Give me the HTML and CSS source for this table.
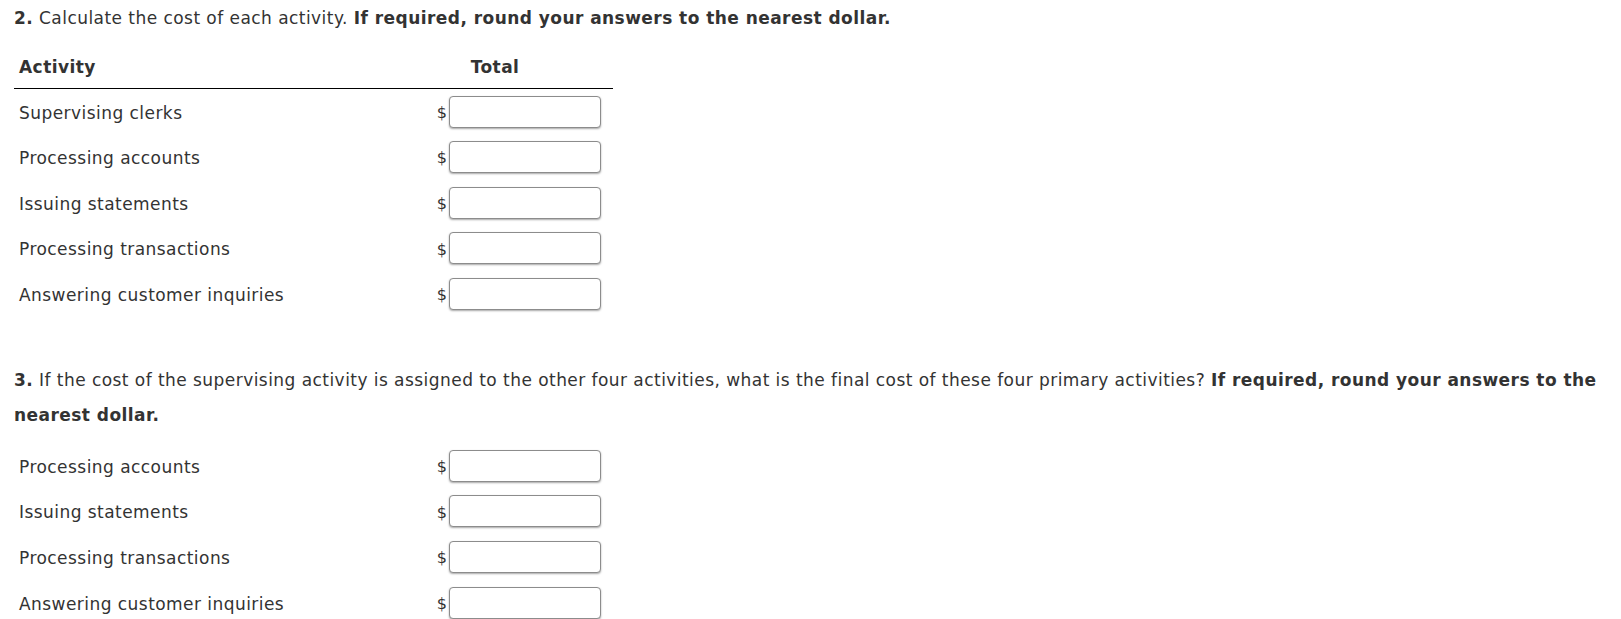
FILE: index.html
```html
<!DOCTYPE html>
<html>
<head>
<meta charset="utf-8">
<link rel="stylesheet" href="styles.css">
</head>
<body>
<div class="page">
  <p class="q q2"><b>2.</b> Calculate the cost of each activity. <b>If required, round your answers to the nearest dollar.</b></p>
  <table class="grid">
    <thead>
      <tr><th class="h-label">Activity</th><th class="h-total">Total</th></tr>
    </thead>
    <tbody>
      <tr><td class="c-label">Supervising clerks</td><td class="c-input"><span class="cur">$</span><span class="box"></span></td></tr>
      <tr><td class="c-label">Processing accounts</td><td class="c-input"><span class="cur">$</span><span class="box"></span></td></tr>
      <tr><td class="c-label">Issuing statements</td><td class="c-input"><span class="cur">$</span><span class="box"></span></td></tr>
      <tr><td class="c-label">Processing transactions</td><td class="c-input"><span class="cur">$</span><span class="box"></span></td></tr>
      <tr><td class="c-label">Answering customer inquiries</td><td class="c-input"><span class="cur">$</span><span class="box"></span></td></tr>
    </tbody>
  </table>
  <p class="q q3"><b>3.</b> If the cost of the supervising activity is assigned to the other four activities, what is the final cost of these four primary activities? <b>If required, round your answers to the<br>nearest dollar.</b></p>
  <table class="grid">
    <tbody>
      <tr><td class="c-label">Processing accounts</td><td class="c-input"><span class="cur">$</span><span class="box"></span></td></tr>
      <tr><td class="c-label">Issuing statements</td><td class="c-input"><span class="cur">$</span><span class="box"></span></td></tr>
      <tr><td class="c-label">Processing transactions</td><td class="c-input"><span class="cur">$</span><span class="box"></span></td></tr>
      <tr><td class="c-label">Answering customer inquiries</td><td class="c-input"><span class="cur">$</span><span class="box"></span></td></tr>
    </tbody>
  </table>
</div>
</body>
</html>
```
FILE: styles.css
```css
html, body {
  margin: 0;
  padding: 0;
  background: #fff;
}
.page {
  padding: 0 0 0 14px;
  font-family: "DejaVu Sans", Verdana, sans-serif;
  font-size: 17px;
  letter-spacing: 0.45px;
  color: #333;
}
.q {
  margin: 0;
  line-height: 35px;
}
.q2 {
  padding-top: 1px;
}
.q3 {
  margin-top: 46px;
  white-space: nowrap;
}
.q b {
  font-weight: bold;
}
.grid {
  border-collapse: collapse;
  width: 599px;
  table-layout: fixed;
}
.grid th {
  font-weight: bold;
  height: 41px;
  line-height: 20px;
  padding: 0 0 11px 0;
  border-bottom: 1px solid #000;
  vertical-align: bottom;
}
.grid th.h-label {
  width: 358px;
  padding-left: 5px;
  text-align: left;
}
.grid th.h-total {
  text-align: center;
}
.grid .c-label {
  width: 358px;
  padding: 2px 0 0 5px;
  text-align: left;
  vertical-align: middle;
}
.grid tbody tr {
  height: 45.67px;
}
.q3 + .grid {
  margin-top: 10px;
}
.c-input {
  text-align: right;
  padding: 0 12px 0 0;
  vertical-align: middle;
}
.cur {
  display: inline-block;
  vertical-align: middle;
  font-size: 16px;
  letter-spacing: 0;
  margin-right: 2px;
  position: relative;
  top: 1px;
}
.box {
  display: inline-block;
  vertical-align: middle;
  width: 150px;
  height: 30px;
  border: 1px solid #8c8c8c;
  border-radius: 4px;
  background: #fff;
  box-shadow: 0 1px 2px rgba(0, 0, 0, 0.35);
}
```
